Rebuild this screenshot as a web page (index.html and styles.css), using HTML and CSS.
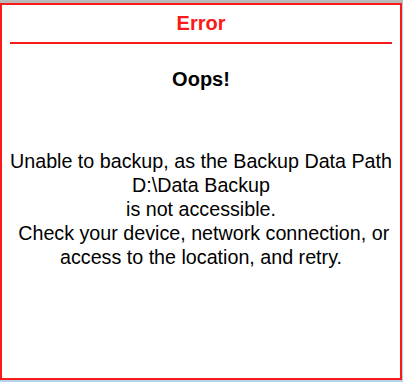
FILE: index.html
```html
<!DOCTYPE html>
<html>
<head>
<meta charset="utf-8">
<link rel="stylesheet" href="styles.css">
</head>
<body>
<div class="topstrip"></div>
<div class="frame">
  <div class="dialog">
    <h1 class="title">Error</h1>
    <div class="rule"></div>
    <h2 class="heading">Oops!</h2>
    <p class="message">Unable to backup, as the Backup Data Path<br>D:\Data Backup<br>is not accessible.<br>&nbsp;Check your device, network connection, or<br>access to the location, and retry.</p>
  </div>
</div>
</body>
</html>
```
FILE: styles.css
```css
html, body {
  margin: 0;
  padding: 0;
  background: #b3d3ec;
  font-family: "Liberation Sans", Arial, sans-serif;
}
.topstrip {
  height: 3px;
  background: #b9b9b9;
}
.frame {
  padding: 0 1px 2px 0;
}
.dialog {
  box-sizing: border-box;
  height: 377px;
  background: #ffffff;
  border: 2px solid #fb1a1a;
  padding: 6px 8px 0 8px;
  display: flex;
  flex-direction: column;
  align-items: stretch;
}
.title {
  margin: 0;
  font-size: 20px;
  line-height: 24px;
  font-weight: bold;
  color: #fb1a1a;
  text-align: center;
}
.rule {
  height: 2px;
  background: #fb1a1a;
  margin: 7px 0 0 0;
}
.heading {
  margin: 23px 0 0 0;
  font-size: 20px;
  line-height: 24px;
  font-weight: bold;
  color: #000000;
  text-align: center;
}
.message {
  margin: 58px 0 0 0;
  font-size: 19.7px;
  line-height: 24px;
  color: #000000;
  text-align: center;
  white-space: nowrap;
}
```
